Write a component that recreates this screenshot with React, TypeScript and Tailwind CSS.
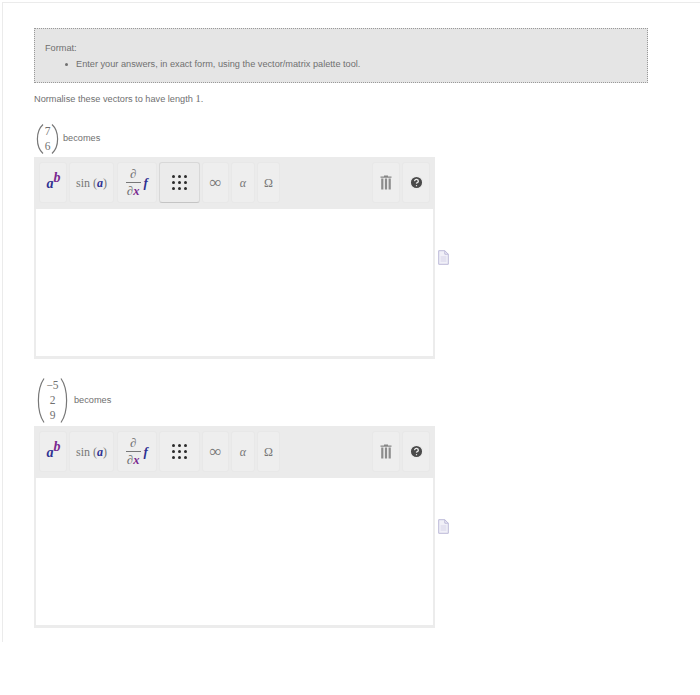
import { CircleHelp } from "lucide-react";

const font = "font-['Liberation_Sans',Arial,sans-serif]";
const math = "font-['Liberation_Serif','DejaVu_Serif',serif]";

function Paren({ height, flip }: { height: number; flip?: boolean }) {
  return (
    <svg width="8" height={height} viewBox={`0 0 8 ${height}`} className={flip ? "-scale-x-100" : ""}>
      <path
        d={`M7 0.5 C3 ${height * 0.14} 1.4 ${height * 0.3} 1.4 ${height / 2} C1.4 ${height * 0.7} 3 ${height * 0.86} 7 ${height - 0.5}`}
        fill="none"
        stroke="#777"
        strokeWidth="1.2"
      />
    </svg>
  );
}

function Vector({ values, height, w }: { values: string[]; height: number; w: string }) {
  return (
    <div className="flex items-center">
      <Paren height={height} />
      <div className={`${w} flex flex-col items-center text-[11.5px] leading-[15px] text-[#707070] ${math}`}>
        {values.map((v) => (
          <span key={v}>{v}</span>
        ))}
      </div>
      <Paren height={height} flip />
    </div>
  );
}

function Btn({ w, active, children }: { w: string; active?: boolean; children: React.ReactNode }) {
  return (
    <div
      className={`${w} h-[41px] flex items-center justify-center rounded-[3px] ${
        active
          ? "bg-[#ebebeb] border border-[#d8d8d8] border-b-[#c4c4c4]"
          : "bg-[#eeeeee] border border-[#e8e8e8]"
      }`}
    >
      {children}
    </div>
  );
}

function DotGrid() {
  return (
    <div className="grid grid-cols-3 gap-x-[3px] gap-y-[3px]">
      {Array.from({ length: 9 }).map((_, i) => (
        <span key={i} className="w-[3px] h-[3px] rounded-full bg-[#2b2b2b]" />
      ))}
    </div>
  );
}

function Trash() {
  return (
    <svg width="12" height="15" viewBox="0 0 12 15">
      <path d="M0.5 1.6 H11.5 V2.8 H0.5 Z M4 0.4 H8 V1.6 H4 Z" fill="#858585" />
      <path d="M1.2 3.4 H3.4 V14.6 H1.2 Z M4.9 3.4 H7.1 V14.6 H4.9 Z M8.6 3.4 H10.8 V14.6 H8.6 Z" fill="#8c8c8c" />
    </svg>
  );
}

function DocIcon() {
  return (
    <svg width="11" height="15" viewBox="0 0 11 15">
      <path d="M0.7 0.7 H6.8 L10.3 4.2 V14.3 H0.7 Z" fill="#f1f0f8" stroke="#bcb9d8" strokeWidth="1" />
      <path d="M6.8 0.7 V4.2 H10.3" fill="none" stroke="#bcb9d8" strokeWidth="1" />
      <path d="M2.6 7 H8.4 M2.6 9 H8.4 M2.6 11 H8.4" stroke="#d6d3e8" strokeWidth="1" />
    </svg>
  );
}

function Editor({ gridActive }: { gridActive?: boolean }) {
  return (
    <div className="flex items-center">
      <div className="w-[401px]">
        <div className="h-[52px] bg-[#ebebeb] flex items-center pl-[5px] pr-[5px] pb-[1px]">
          <div className={`flex items-center gap-[2px] ${math}`}>
            <Btn w="w-[28px]">
              <span className="ml-[1px] font-bold italic text-[#2e3192] text-[14px] leading-none mt-[3px]">
                a<span className="text-[#7a2a90] relative -top-[6px]">b</span>
              </span>
            </Btn>
            <Btn w="w-[45px] mr-[1px]">
              <span className="text-[#777] text-[12px] whitespace-nowrap">
                sin (<b className="italic text-[#2e3192]">a</b>)
              </span>
            </Btn>
            <Btn w="w-[40px]">
              <div className="flex items-center gap-[3px]">
                <div className="flex flex-col items-center text-[12.5px] leading-[16px] text-[#707070]">
                  <span className="px-[1px] italic">∂</span>
                  <span className="border-t border-[#777] px-[1px] italic">
                    ∂<b className="text-[#7a2a90]">x</b>
                  </span>
                </div>
                <span className="font-bold italic text-[#2e3192] text-[13px]">f</span>
              </div>
            </Btn>
            <Btn w="w-[41px]" active={gridActive}>
              <DotGrid />
            </Btn>
            <Btn w="w-[27px]">
              <span className="text-[#777] text-[17px] leading-none">∞</span>
            </Btn>
            <Btn w="w-[24px]">
              <span className="text-[#777] text-[12px] italic">α</span>
            </Btn>
            <Btn w="w-[23px]">
              <span className="text-[#777] text-[12px]">Ω</span>
            </Btn>
          </div>
          <div className="ml-auto flex items-center gap-[2px]">
            <Btn w="w-[28px]">
              <Trash />
            </Btn>
            <Btn w="w-[28px]">
              <CircleHelp size={15} fill="#4a4a4a" stroke="#ebebeb" strokeWidth={2.2} />
            </Btn>
          </div>
        </div>
        <div className="h-[150px] bg-white border-x-2 border-b-[3px] border-[#ececec]" />
      </div>
      <div className="ml-[3px] -mt-[2px]">
        <DocIcon />
      </div>
    </div>
  );
}

export default function App() {
  return (
    <div className={`h-[695px] w-[700px] bg-white overflow-hidden text-[#707070] ${font}`}>
      <div className="mt-[2px] ml-[2px] h-[640px] border-l border-t border-[#ebebeb] pl-[31px] pt-[25px]">
        <div className="w-[614px] h-[55px] bg-[#e5e5e5] border border-dotted border-[#999] pl-[10px] pt-[11px] text-[9.2px] leading-[16px]">
          <div>Format:</div>
          <div className="flex items-center pl-[20px]">
            <span className="w-[3px] h-[3px] rounded-full bg-[#707070] mr-[8px]" />
            <span>Enter your answers, in exact form, using the vector/matrix palette tool.</span>
          </div>
        </div>
        <p className="mt-[8px] text-[9.2px] leading-[16px]">
          Normalise these vectors to have length <span className={`${math} text-[10.5px]`}>1</span>.
        </p>
        <div className="mt-[17px] flex items-center h-[30px] text-[9.2px] pl-[2px]">
          <Vector values={["7", "6"]} height={30} w="w-[7px]" />
          <span className="ml-[4px]">becomes</span>
        </div>
        <div className="mt-[3px]">
          <Editor gridActive />
        </div>
        <div className="mt-[19px] h-[48px] text-[9.2px] pl-[3px]">
          <div className="flex items-center h-[45px]">
            <Vector values={["−5", "2", "9"]} height={45} w="w-[15px]" />
            <span className="ml-[6px]">becomes</span>
          </div>
        </div>
        <div>
          <Editor />
        </div>
      </div>
    </div>
  );
}
